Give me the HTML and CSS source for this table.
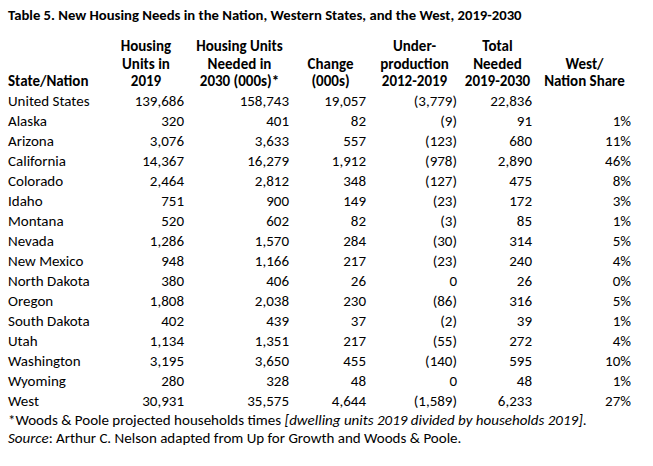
FILE: index.html
```html
<!DOCTYPE html>
<html lang="en">
<head>
<meta charset="utf-8">
<title>Table 5</title>
<link rel="stylesheet" href="styles.css">
</head>
<body>
<div class="page">
  <h1 class="title">Table 5. New Housing Needs in the Nation, Western States, and the West, 2019-2030</h1>
  <table class="data">
    <colgroup>
      <col class="c0"><col class="c1"><col class="c2"><col class="c3"><col class="c4"><col class="c5"><col class="c6">
    </colgroup>
    <thead>
      <tr>
        <th class="state">State/Nation</th>
        <th>Housing<br>Units in<br>2019</th>
        <th>Housing Units<br>Needed in<br>2030 (000s)*</th>
        <th>Change<br>(000s)</th>
        <th>Under-<br>production<br>2012-2019</th>
        <th>Total<br>Needed<br>2019-2030</th>
        <th>West/<br>Nation Share</th>
      </tr>
    </thead>
    <tbody>
      <tr><td class="state">United States</td><td>139,686</td><td>158,743</td><td>19,057</td><td>(3,779)</td><td>22,836</td><td></td></tr>
      <tr><td class="state">Alaska</td><td>320</td><td>401</td><td>82</td><td>(9)</td><td>91</td><td>1%</td></tr>
      <tr><td class="state">Arizona</td><td>3,076</td><td>3,633</td><td>557</td><td>(123)</td><td>680</td><td>11%</td></tr>
      <tr><td class="state">California</td><td>14,367</td><td>16,279</td><td>1,912</td><td>(978)</td><td>2,890</td><td>46%</td></tr>
      <tr><td class="state">Colorado</td><td>2,464</td><td>2,812</td><td>348</td><td>(127)</td><td>475</td><td>8%</td></tr>
      <tr><td class="state">Idaho</td><td>751</td><td>900</td><td>149</td><td>(23)</td><td>172</td><td>3%</td></tr>
      <tr><td class="state">Montana</td><td>520</td><td>602</td><td>82</td><td>(3)</td><td>85</td><td>1%</td></tr>
      <tr><td class="state">Nevada</td><td>1,286</td><td>1,570</td><td>284</td><td>(30)</td><td>314</td><td>5%</td></tr>
      <tr><td class="state">New Mexico</td><td>948</td><td>1,166</td><td>217</td><td>(23)</td><td>240</td><td>4%</td></tr>
      <tr><td class="state">North Dakota</td><td>380</td><td>406</td><td>26</td><td>0</td><td>26</td><td>0%</td></tr>
      <tr><td class="state">Oregon</td><td>1,808</td><td>2,038</td><td>230</td><td>(86)</td><td>316</td><td>5%</td></tr>
      <tr><td class="state">South Dakota</td><td>402</td><td>439</td><td>37</td><td>(2)</td><td>39</td><td>1%</td></tr>
      <tr><td class="state">Utah</td><td>1,134</td><td>1,351</td><td>217</td><td>(55)</td><td>272</td><td>4%</td></tr>
      <tr><td class="state">Washington</td><td>3,195</td><td>3,650</td><td>455</td><td>(140)</td><td>595</td><td>10%</td></tr>
      <tr><td class="state">Wyoming</td><td>280</td><td>328</td><td>48</td><td>0</td><td>48</td><td>1%</td></tr>
      <tr><td class="state">West</td><td>30,931</td><td>35,575</td><td>4,644</td><td>(1,589)</td><td>6,233</td><td>27%</td></tr>
    </tbody>
  </table>
  <p class="note">*Woods &amp; Poole projected households times <i>[dwelling units 2019 divided by households 2019]</i>.</p>
  <p class="note"><i>Source</i>: Arthur C. Nelson adapted from Up for Growth and Woods &amp; Poole.</p>
</div>
</body>
</html>
```
FILE: styles.css
```css
html, body {
  margin: 0;
  padding: 0;
  background: #ffffff;
}
body {
  font-family: Carlito, Lato, "Open Sans", sans-serif;
  font-size: 15px;
  color: #000000;
}
.page {
  width: 653px;
  padding-top: 5px;
}
.title {
  margin: 0 0 13px 0;
  padding-left: 8px;
  font-size: 14.7px;
  font-weight: bold;
  line-height: 20px;
  white-space: nowrap;
}
.data {
  border-collapse: collapse;
  table-layout: fixed;
  width: 634px;
}
.c0 { width: 105px; }
.c1 { width: 82px; }
.c2 { width: 105px; }
.c3 { width: 77px; }
.c4 { width: 91px; }
.c5 { width: 75px; }
.c6 { width: 99px; }
.data th {
  font-weight: bold;
  text-align: center;
  vertical-align: bottom;
  line-height: 17.5px;
  padding: 0 3px;
  white-space: nowrap;
}
.data td {
  text-align: right;
  line-height: 20px;
  height: 20px;
  padding: 0 3px;
  white-space: nowrap;
}
.data .state {
  text-align: left;
  padding-left: 8px;
}
.note {
  margin: 0;
  padding-left: 8px;
  line-height: 18.3px;
  white-space: nowrap;
}
```
